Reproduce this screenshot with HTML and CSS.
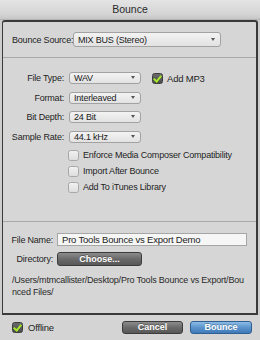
FILE: index.html
```html
<!DOCTYPE html>
<html>
<head>
<meta charset="utf-8">
<link rel="stylesheet" href="styles.css">
</head>
<body>
<div class="window">
  <div class="titlebar">Bounce</div>
  <div class="panel">
    <div class="section source">
      <span class="label">Bounce Source:</span>
      <div class="select">MIX BUS (Stereo)</div>
    </div>
    <div class="section options">
      <div class="fmt-grid">
        <span class="label r">File Type:</span>
        <div class="select">WAV</div>
        <div class="check mp3"><span class="box on"></span>Add MP3</div>
        <span class="label r">Format:</span>
        <div class="select">Interleaved</div>
        <span></span>
        <span class="label r">Bit Depth:</span>
        <div class="select">24 Bit</div>
        <span></span>
        <span class="label r">Sample Rate:</span>
        <div class="select">44.1 kHz</div>
        <span></span>
      </div>
      <div class="checks">
        <div class="check"><span class="box"></span>Enforce Media Composer Compatibility</div>
        <div class="check"><span class="box"></span>Import After Bounce</div>
        <div class="check"><span class="box"></span>Add To iTunes Library</div>
      </div>
    </div>
    <div class="section file">
      <div class="file-grid">
        <span class="label r">File Name:</span>
        <div class="input">Pro Tools Bounce vs Export Demo</div>
        <span class="label r">Directory:</span>
        <div class="btn dark choose">Choose...</div>
      </div>
      <div class="path">/Users/mtmcallister/Desktop/Pro Tools Bounce vs Export/Bounced Files/</div>
    </div>
  </div>
  <div class="footer">
    <div class="check offline"><span class="box on"></span>Offline</div>
    <div class="btn dark cancel">Cancel</div>
    <div class="btn blue bounce">Bounce</div>
  </div>
</div>
</body>
</html>
```
FILE: styles.css
```css
* { box-sizing: border-box; }
html, body { margin: 0; padding: 0; }
body {
  width: 260px;
  height: 340px;
  background: #cdcdcd;
  font-family: "Liberation Sans", Arial, sans-serif;
  font-size: 9px;
  letter-spacing: -0.2px;
  color: #1e1e1e;
  overflow: hidden;
}
.window { width: 260px; height: 340px; display: flex; flex-direction: column; }
.titlebar {
  height: 20px;
  flex: none;
  background: linear-gradient(#e4e4e4, #d4d4d4 75%, #c6c6c6);
  border-bottom: 1px solid #b4b4b4;
  text-align: center;
  font-size: 10.5px;
  letter-spacing: 0;
  line-height: 19px;
  color: #2a2a2a;
}
.panel {
  flex: none;
  height: 295px;
  margin: 0 2px 0 2px;
  background: #d6d6d6;
  border: 1px solid #3a3a3a;
  border-top-width: 2px;
  border-bottom-width: 2px;
  border-right-width: 2px;
  border-radius: 3px 3px 0 0;
  display: flex;
  flex-direction: column;
}
.section { border-bottom: 1px solid #a9a9a9; }
.section:last-child { border-bottom: none; }
.source {
  height: 36px;
  display: grid;
  grid-template-columns: 61px 148px;
  align-items: center;
  padding-left: 9px;
}
.options { height: 164px; padding-top: 14px; }
.fmt-grid {
  display: grid;
  grid-template-columns: 61px 72px auto;
  column-gap: 5px;
  grid-auto-rows: 12px;
  row-gap: 7.5px;
  align-items: center;
}
.label { white-space: nowrap; }
.label.r { text-align: right; }
.select {
  position: relative;
  height: 12px;
  line-height: 11px;
  padding-left: 4px;
  background: linear-gradient(#f3f3f3, #e2e2e2);
  border: 1px solid #a2a2a2;
  border-radius: 3px;
  color: #1a1a1a;
  white-space: nowrap;
}
.source .select { height: 15px; line-height: 14px; }
.select::after {
  content: "";
  position: absolute;
  right: 5px;
  top: 50%;
  margin-top: -2px;
  border-left: 2.5px solid transparent;
  border-right: 2.5px solid transparent;
  border-top: 3px solid #555;
}
.check { display: flex; align-items: center; gap: 4px; white-space: nowrap; }
.mp3 { margin-left: 6px; font-size: 9.5px; }
.box {
  flex: none;
  width: 11px;
  height: 11px;
  border: 1px solid #a8a8a8;
  border-radius: 2.5px;
  background: linear-gradient(#f0f0f0, #dedede);
  position: relative;
}
.box.on {
  background: linear-gradient(#6a6a6a, #4a4a4a);
  border-color: #3c3c3c;
}
.box.on::after {
  content: "";
  position: absolute;
  left: 2px;
  top: 0px;
  width: 3px;
  height: 6px;
  border-right: 2px solid #a6e82a;
  border-bottom: 2px solid #a6e82a;
  transform: rotate(40deg);
}
.checks {
  display: flex;
  flex-direction: column;
  gap: 5px;
  margin-top: 7px;
  padding-left: 65px;
}
.checks .check { height: 11px; }
.file { flex: 1; padding-top: 11px; }
.file-grid {
  display: grid;
  grid-template-columns: 50px 190px;
  column-gap: 4px;
  row-gap: 6px;
  align-items: center;
}
.input {
  height: 13px;
  line-height: 12px;
  padding-left: 4px;
  background: #f6f6f6;
  border: 1px solid #a6a6a6;
  font-size: 9.5px;
  color: #222;
}
.btn {
  height: 13px;
  line-height: 11px;
  border-radius: 3px;
  text-align: center;
  color: #fff;
  font-weight: bold;
  font-size: 9px;
  letter-spacing: 0;
}
.dark {
  background: linear-gradient(#8c8c8c, #6a6a6a 50%, #585858);
  border: 1px solid #3c3c3c;
  text-shadow: 0 -1px 0 rgba(0,0,0,0.3);
}
.blue {
  background: linear-gradient(#8cbbe6, #5b94cc 50%, #3f79b8);
  border: 1px solid #2f5f90;
  text-shadow: 0 -1px 0 rgba(0,0,0,0.25);
}
.choose { width: 85px; height: 14px; line-height: 12px; }
.path {
  margin-top: 9px;
  padding-left: 9px;
  width: 245px;
  line-height: 11.5px;
  word-break: break-all;
  color: #2a2a2a;
}
.footer {
  flex: 1;
  display: flex;
  align-items: center;
  padding: 0 8px 0 12px;
  background: #d4d4d4;
}
.offline { margin-right: auto; gap: 5px; font-size: 9.5px; }
.cancel { width: 61px; }
.bounce { width: 62px; margin-left: 7px; }
```
